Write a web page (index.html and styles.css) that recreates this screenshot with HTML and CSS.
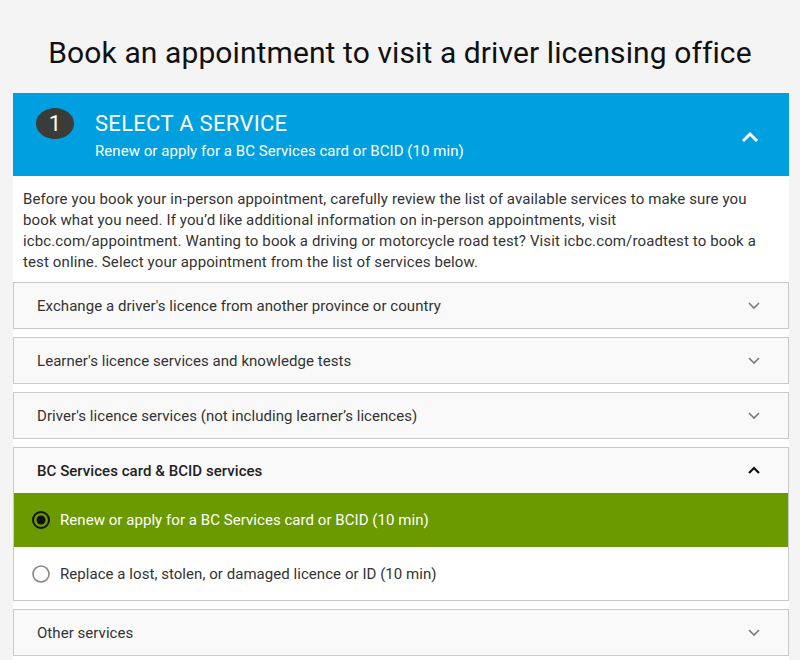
FILE: index.html
```html
<!DOCTYPE html>
<html lang="en">
<head>
<meta charset="utf-8">
<title>Book an appointment</title>
<link rel="stylesheet" href="styles.css">
</head>
<body>
<h1 class="page-title">Book an appointment to visit a driver licensing office</h1>
<main class="panel">
  <header class="step-header">
    <div class="step-num">1</div>
    <div class="step-text">
      <div class="step-title">SELECT A SERVICE</div>
      <div class="step-sub">Renew or apply for a BC Services card or BCID (10 min)</div>
    </div>
    <svg class="step-chev" width="18" height="12" viewBox="0 0 18 12"><path d="M2 10 L9 3 L16 10" fill="none" stroke="#fff" stroke-width="3"/></svg>
  </header>
  <p class="intro">Before you book your in-person appointment, carefully review the list of available services to make sure you book what you need. If you’d like additional information on in-person appointments, visit icbc.com/appointment. Wanting to book a driving or motorcycle road test? Visit icbc.com/roadtest to book a test online. Select your appointment from the list of services below.</p>
  <div class="list">
    <div class="item">
      <div class="item-head"><span>Exchange a driver's licence from another province or country</span><svg class="chev" width="14" height="9" viewBox="0 0 14 9"><path d="M2 2 L7 7 L12 2" fill="none" stroke="#7a7a7a" stroke-width="1.6"/></svg></div>
    </div>
    <div class="item">
      <div class="item-head"><span>Learner's licence services and knowledge tests</span><svg class="chev" width="14" height="9" viewBox="0 0 14 9"><path d="M2 2 L7 7 L12 2" fill="none" stroke="#7a7a7a" stroke-width="1.6"/></svg></div>
    </div>
    <div class="item">
      <div class="item-head"><span>Driver's licence services (not including learner’s licences)</span><svg class="chev" width="14" height="9" viewBox="0 0 14 9"><path d="M2 2 L7 7 L12 2" fill="none" stroke="#7a7a7a" stroke-width="1.6"/></svg></div>
    </div>
    <div class="item open">
      <div class="item-head bold"><span>BC Services card &amp; BCID services</span><svg class="chev" width="14" height="9" viewBox="0 0 14 9"><path d="M2 7 L7 2 L12 7" fill="none" stroke="#111" stroke-width="2.2"/></svg></div>
      <div class="option selected">
        <svg class="radio" width="20" height="20" viewBox="0 0 20 20"><circle cx="10" cy="10" r="8" fill="none" stroke="#141414" stroke-width="2"/><circle cx="10" cy="10" r="4.5" fill="#111"/></svg>
        <span>Renew or apply for a BC Services card or BCID (10 min)</span>
      </div>
      <div class="option">
        <svg class="radio" width="20" height="20" viewBox="0 0 20 20"><circle cx="10" cy="10" r="8" fill="#fff" stroke="#8a8a8a" stroke-width="1.6"/></svg>
        <span>Replace a lost, stolen, or damaged licence or ID (10 min)</span>
      </div>
    </div>
    <div class="item">
      <div class="item-head"><span>Other services</span><svg class="chev" width="14" height="9" viewBox="0 0 14 9"><path d="M2 2 L7 7 L12 2" fill="none" stroke="#7a7a7a" stroke-width="1.6"/></svg></div>
    </div>
  </div>
</main>
</body>
</html>
```
FILE: styles.css
```css
html, body {
  margin: 0;
  padding: 0;
  background: #f4f4f4;
  font-family: Roboto, "Liberation Sans", sans-serif;
  color: #333;
  letter-spacing: 0.05px;
}
.page-title {
  margin: 0;
  padding: 33px 0 20px;
  text-align: center;
  font-size: 30px;
  line-height: 40px;
  font-weight: 400;
  color: #111;
  letter-spacing: 0.1px;
}
.panel {
  margin-left: 13px;
  width: 776px;
  background: #fff;
  padding-bottom: 4px;
}
.step-header {
  height: 83px;
  box-sizing: border-box;
  background: #009fe0;
  display: flex;
  align-items: center;
  padding: 0 30px 0 23px;
  color: #fff;
}
.step-num {
  width: 38px;
  height: 31px;
  border-radius: 50%;
  background: #3b3b38;
  color: #fff;
  font-size: 22px;
  display: flex;
  align-items: center;
  justify-content: center;
  align-self: flex-start;
  margin-top: 15px;
  flex: none;
}
.step-text {
  margin-left: 21px;
  flex: 1;
  align-self: flex-start;
  padding-top: 18px;
}
.step-title {
  font-size: 22px;
  line-height: 26px;
  letter-spacing: 0.3px;
}
.step-sub {
  font-size: 15px;
  line-height: 20px;
  margin-top: 4px;
}
.step-chev {
  margin-top: 4px;
}
.intro {
  margin: 0;
  padding: 13px 26px 9px 10px;
  font-size: 15px;
  line-height: 21px;
  color: #333;
  letter-spacing: 0.12px;
}
.list {
  display: flex;
  flex-direction: column;
  gap: 8px;
}
.item {
  border: 1px solid #c9c9c9;
  background: #f9f9f9;
}
.item-head {
  height: 45px;
  display: flex;
  align-items: center;
  justify-content: space-between;
  padding: 0 27px 0 23px;
  font-size: 15px;
}
.item-head.bold {
  font-weight: 500;
  color: #222;
}
.option {
  display: flex;
  align-items: center;
  gap: 9px;
  padding: 0 17px;
  font-size: 15px;
  background: #fff;
  height: 53px;
}
.option.selected {
  background: #6a9a00;
  color: #fff;
  height: 54px;
}
.radio {
  flex: none;
}
```
